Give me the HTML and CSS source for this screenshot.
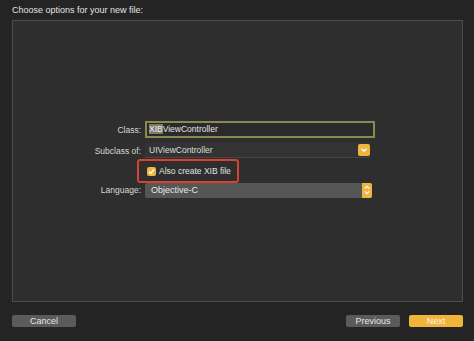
FILE: index.html
```html
<!DOCTYPE html>
<html lang="en">
<head>
  <meta charset="UTF-8" />
  <title>Choose options</title>
  <link rel="stylesheet" href="styles.css">
</head>
<body>
  <div class="sheet">
    <div class="title">Choose options for your new file:</div>

    <div class="panel">
      <div class="form">
        <div class="row row-class">
          <label class="label">Class:</label>
          <div class="text-field focused"><span class="sel">XIB</span>ViewController</div>
        </div>

        <div class="row row-sub">
          <label class="label">Subclass of:</label>
          <div class="combo">
            <span class="combo-text">UIViewController</span>
            <span class="combo-btn">
              <svg width="8" height="6" viewBox="0 0 8 6"><path d="M1.5 1.8 L4 4.3 L6.5 1.8" fill="none" stroke="#fff" stroke-width="1.3"/></svg>
            </span>
          </div>
        </div>

        <div class="row row-check">
          <span class="label"></span>
          <div class="highlight">
            <span class="checkbox">
              <svg width="9" height="9" viewBox="0 0 9 9"><path d="M2 4.6 L3.8 6.4 L7 2.4" fill="none" stroke="#fff" stroke-width="1.4"/></svg>
            </span>
            <span class="check-text">Also create XIB file</span>
          </div>
        </div>

        <div class="row row-lang">
          <label class="label">Language:</label>
          <div class="popup">
            <span class="popup-text">Objective-C</span>
            <span class="popup-btn">
              <svg width="8" height="12" viewBox="0 0 8 12"><path d="M1.8 4.6 L4 2.4 L6.2 4.6 M1.8 7.4 L4 9.6 L6.2 7.4" fill="none" stroke="#fff" stroke-width="1.2"/></svg>
            </span>
          </div>
        </div>
      </div>
    </div>

    <div class="footer">
      <button class="btn">Cancel</button>
      <div class="spacer"></div>
      <button class="btn btn-prev">Previous</button>
      <button class="btn btn-next">Next</button>
    </div>
  </div>
</body>
</html>
```

FILE: styles.css
```css
body {
  margin: 0;
  background-color: #242424;
  font-family: 'Liberation Sans', Arial, sans-serif;
  color: #dcdcdc;
  width: 474px;
  height: 341px;
  overflow: hidden;
}

.sheet {
  padding: 0 11px 0 12px;
  display: flex;
  flex-direction: column;
}

.title {
  height: 20px;
  line-height: 20px;
  font-size: 9px;
  color: #e2e2e2;
}

.panel {
  height: 280px;
  background-color: #2e2e2e;
  border: 1px solid #4c4c4c;
  display: flex;
  flex-direction: column;
}

.form {
  padding-top: 100px;
  display: flex;
  flex-direction: column;
}

.row {
  display: flex;
  align-items: center;
}

.label {
  width: 128px;
  text-align: right;
  font-size: 8.5px;
  color: #d8d8d8;
  padding-right: 4px;
  flex-shrink: 0;
}

.row-class {
  height: 17px;
}

.text-field {
  width: 224px;
  height: 13px;
  line-height: 13px;
  border: 2px solid #8b8a4e;
  background-color: #2a2a2a;
  font-size: 8.5px;
  color: #e4e4e4;
  padding-left: 2px;
}

.sel {
  background-color: #7c7c6a;
  color: #f2f2f2;
}

.row-sub {
  margin-top: 5px;
  height: 15px;
}

.combo {
  width: 225px;
  height: 15px;
  display: flex;
  align-items: center;
  background-color: #333333;
  border-bottom: 1px solid #464646;
  box-sizing: border-box;
}

.combo-text {
  flex: 1;
  font-size: 8.5px;
  color: #dedede;
  padding-left: 4px;
}

.combo-btn {
  width: 12px;
  height: 12px;
  border-radius: 2px;
  background-color: #f0b53c;
  display: flex;
  align-items: center;
  justify-content: center;
}

.row-check {
  margin-top: 1px;
  height: 24px;
  margin-bottom: -1px;
}

.highlight {
  margin-left: -8px;
  width: 90px;
  height: 20px;
  border: 2px solid #d8402f;
  border-radius: 3px;
  display: flex;
  align-items: center;
  padding-left: 8px;
}

.checkbox {
  width: 9px;
  height: 9px;
  border-radius: 2px;
  background-color: #f0b53c;
  display: flex;
  align-items: center;
  justify-content: center;
}

.check-text {
  margin-left: 3px;
  font-size: 8.5px;
  color: #e2e2e2;
}

.row-lang {
  height: 16px;
}

.popup {
  width: 227px;
  height: 15px;
  display: flex;
  align-items: center;
  background-color: #565656;
  border-radius: 2px;
}

.popup-text {
  flex: 1;
  font-size: 9px;
  color: #e8e8e8;
  padding-left: 6px;
}

.popup-btn {
  width: 10px;
  height: 15px;
  border-radius: 0 2px 2px 0;
  background-color: #f0b53c;
  display: flex;
  align-items: center;
  justify-content: center;
}

.footer {
  margin-top: 13px;
  display: flex;
  align-items: center;
}

.spacer {
  flex: 1;
}

.btn {
  height: 12px;
  padding: 0;
  border: none;
  border-radius: 2px;
  background-color: #5b5b5b;
  color: #e6e6e6;
  font-family: 'Liberation Sans', Arial, sans-serif;
  font-size: 9px;
  line-height: 12px;
  width: 64px;
}

.btn-prev {
  width: 54px;
  margin-right: 9px;
}

.btn-next {
  width: 54px;
  background-color: #f0b43a;
  color: #fff6e0;
}
```
